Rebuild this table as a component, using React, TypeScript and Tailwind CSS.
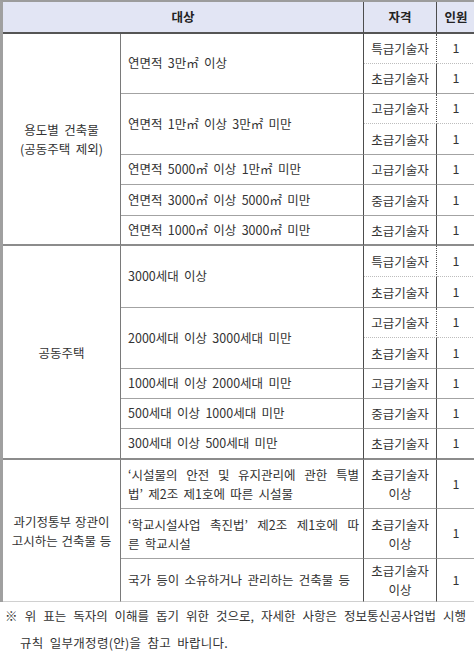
import React from 'react';

const font = { fontFamily: '"Noto Sans CJK KR", "Noto Sans", sans-serif' };

const rowLine = 'border-b border-b-[#a3a3a3]';
const dotLine = 'border-b border-dotted border-b-[#bdbdbd]';
const groupLine = 'border-b-2 border-b-[#8c8c8c]';

function Group({ label }: { label: React.ReactNode }) {
  return (
    <div className={`row-span-7 flex items-center justify-center border-r border-r-[#7a7a7a] ${groupLine} text-center leading-[19px]`}>
      {label}
    </div>
  );
}

function Target({ children, span2, line }: { children: React.ReactNode; span2?: boolean; line: string }) {
  return (
    <div className={`${span2 ? 'row-span-2' : ''} flex items-center border-r border-r-[#4d4d4d] pl-[7px] pr-[4px] ${line}`}>
      {children}
    </div>
  );
}

function Grade({ children, line }: { children: React.ReactNode; line: string }) {
  return (
    <div className={`flex flex-col items-center justify-center border-r border-r-[#4d4d4d] text-center leading-[19px] ${line}`}>
      {children}
    </div>
  );
}

function Count({ line }: { line: string }) {
  return <div className={`flex items-center justify-center ${line}`}>1</div>;
}

function TwoLine({ first, second }: { first: string; second: string }) {
  return (
    <div className="w-full leading-[19px]">
      <div className="text-justify [text-align-last:justify]">{first}</div>
      <div>{second}</div>
    </div>
  );
}

export default function App() {
  return (
    <div className="w-[474px] h-[653px] overflow-hidden bg-white text-[12.5px] text-[#333] [word-spacing:2.5px]" style={font}>
      <div className="w-[475px] grid grid-cols-[118px_243px_73px_38px] grid-rows-[32px_30px_30px_30px_31px_30px_31px_30px_31px_31px_30px_31px_30px_30px_31px_49px_50px_43px] border-t-2 border-t-[#9c9c9c] border-l-[3px] border-l-[#a0a0a0]">
        {/* header */}
        <div className="col-span-2 flex items-center justify-center bg-[#e2e5f4] border-r border-r-[#4d4d4d] border-b-2 border-b-[#555] font-bold text-[#222]">
          대상
        </div>
        <div className="flex items-center justify-center bg-[#e2e5f4] border-r border-r-[#4d4d4d] border-b-2 border-b-[#555] font-bold text-[#222]">
          자격
        </div>
        <div className="flex items-center justify-center bg-[#e2e5f4] border-b-2 border-b-[#555] font-bold text-[#222]">
          인원
        </div>

        {/* 용도별 건축물 */}
        <Group label={<>용도별 건축물<br />(공동주택 제외)</>} />
        <Target span2 line={rowLine}>연면적 3만㎡ 이상</Target>
        <Grade line={dotLine}>특급기술자</Grade>
        <Count line={dotLine} />
        <Grade line={rowLine}>초급기술자</Grade>
        <Count line={rowLine} />

        <Target span2 line={rowLine}>연면적 1만㎡ 이상 3만㎡ 미만</Target>
        <Grade line={dotLine}>고급기술자</Grade>
        <Count line={dotLine} />
        <Grade line={rowLine}>초급기술자</Grade>
        <Count line={rowLine} />

        <Target line={rowLine}>연면적 5000㎡ 이상 1만㎡ 미만</Target>
        <Grade line={rowLine}>고급기술자</Grade>
        <Count line={rowLine} />

        <Target line={rowLine}>연면적 3000㎡ 이상 5000㎡ 미만</Target>
        <Grade line={rowLine}>중급기술자</Grade>
        <Count line={rowLine} />

        <Target line={groupLine}>연면적 1000㎡ 이상 3000㎡ 미만</Target>
        <Grade line={groupLine}>초급기술자</Grade>
        <Count line={groupLine} />

        {/* 공동주택 */}
        <Group label="공동주택" />
        <Target span2 line={rowLine}>3000세대 이상</Target>
        <Grade line={dotLine}>특급기술자</Grade>
        <Count line={dotLine} />
        <Grade line={rowLine}>초급기술자</Grade>
        <Count line={rowLine} />

        <Target span2 line={rowLine}>2000세대 이상 3000세대 미만</Target>
        <Grade line={dotLine}>고급기술자</Grade>
        <Count line={dotLine} />
        <Grade line={rowLine}>초급기술자</Grade>
        <Count line={rowLine} />

        <Target line={rowLine}>1000세대 이상 2000세대 미만</Target>
        <Grade line={rowLine}>고급기술자</Grade>
        <Count line={rowLine} />

        <Target line={rowLine}>500세대 이상 1000세대 미만</Target>
        <Grade line={rowLine}>중급기술자</Grade>
        <Count line={rowLine} />

        <Target line={groupLine}>300세대 이상 500세대 미만</Target>
        <Grade line={groupLine}>초급기술자</Grade>
        <Count line={groupLine} />

        {/* 과기정통부 고시 */}
        <div className="row-span-3 flex items-center justify-center border-r border-r-[#7a7a7a] border-b border-b-[#d0d0d0] text-center leading-[19px] [word-spacing:1px]">
          과기정통부 장관이<br />고시하는 건축물 등
        </div>
        <Target line={rowLine}>
          <TwoLine first="‘시설물의 안전 및 유지관리에 관한 특별" second="법’ 제2조 제1호에 따른 시설물" />
        </Target>
        <Grade line={rowLine}>초급기술자<span>이상</span></Grade>
        <Count line={rowLine} />

        <Target line={rowLine}>
          <TwoLine first="‘학교시설사업 촉진법’ 제2조 제1호에 따" second="른 학교시설" />
        </Target>
        <Grade line={rowLine}>초급기술자<span>이상</span></Grade>
        <Count line={rowLine} />

        <Target line="border-b border-b-[#d0d0d0]">국가 등이 소유하거나 관리하는 건축물 등</Target>
        <Grade line="border-b border-b-[#d0d0d0]">초급기술자<span>이상</span></Grade>
        <Count line="border-b border-b-[#d0d0d0]" />
      </div>

      <div className="text-[12.5px] leading-[27px] text-[#333] [word-spacing:4px]">
        <div className="pl-[5px] pr-[8px] text-justify [text-align-last:justify]">
          ※ 위 표는 독자의 이해를 돕기 위한 것으로, 자세한 사항은 정보통신공사업법 시행
        </div>
        <div className="pl-[20px] tracking-[0.3px] [word-spacing:3px]">규칙 일부개정령(안)을 참고 바랍니다.</div>
      </div>
    </div>
  );
}
